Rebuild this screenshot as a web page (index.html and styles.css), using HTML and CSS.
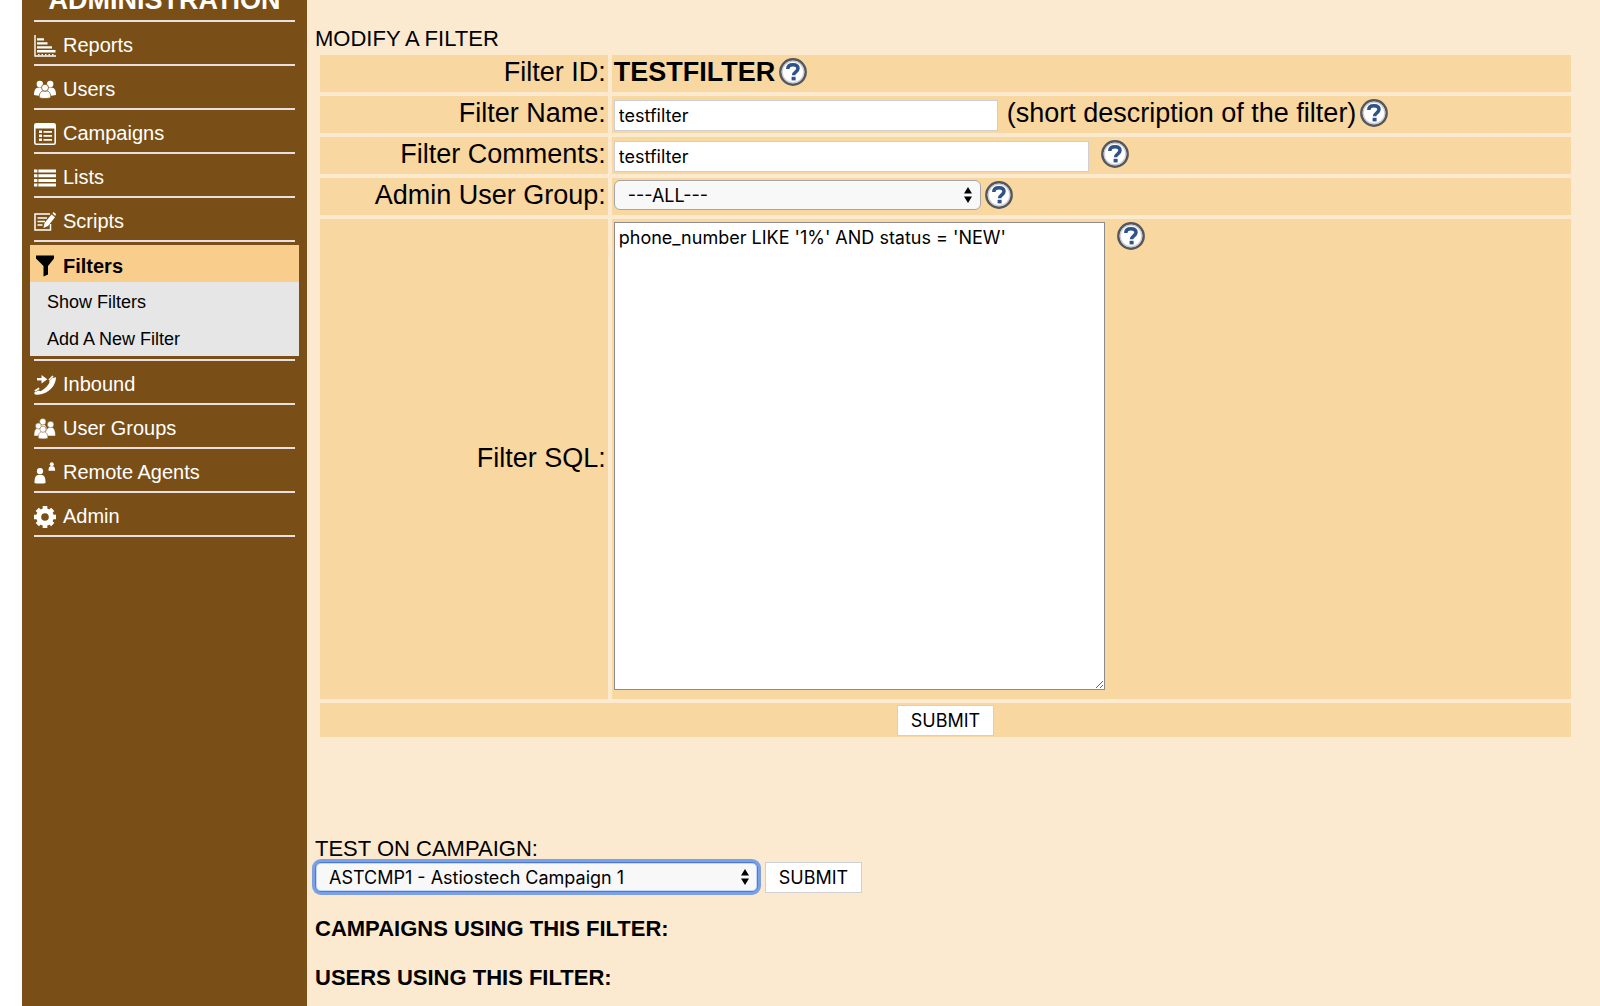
FILE: index.html
```html
<!DOCTYPE html>
<html lang="en">
<head>
<meta charset="utf-8">
<meta name="viewport" content="width=device-width, initial-scale=1">
<title>Administration: Modify Filter</title>
<link rel="stylesheet" href="styles.css">
</head>
<body>
<svg class="sprite" aria-hidden="true">
  <symbol id="help" viewBox="0 0 28 28">
    <circle cx="14" cy="14" r="12.6" fill="#fff" stroke="#55575a" stroke-width="2.6"/>
    <circle cx="14" cy="14" r="10.8" fill="none" stroke="#c9ccd6" stroke-width="1.2"/>
    <path d="M8.800 11C8.800 7.800 11 6.800 14 6.800c3.200 0 5 1.400 5 3.800 0 3.200-4.400 3.200-4.400 6.600" fill="none" stroke="#2f5288" stroke-width="3.500"/>
    <rect x="12.600" y="18.800" width="4" height="3.600" fill="#2f5288"/>
  </symbol>
</svg>
<div class="page">
  <nav class="sidebar" aria-label="Administration">
    <h1 class="brand">ADMINISTRATION</h1>
    <ul class="menu">
      <li><a class="item" href="#reports">
        <svg class="icon" viewBox="0 0 22 22"><path d="M1 0v21h21" fill="none" stroke="#fff" stroke-width="1.4"/><path d="M3 3.200h7v2.200H3zM3 7.200h10.500v2.200H3zM3 11.200h15v2.200H3zM3 15h18.500v2.400H3z" fill="#fff"/><path d="M4 19.600h17" stroke="#fff" stroke-width="1.200" stroke-dasharray="1.500 2"/></svg>Reports</a></li>
      <li><a class="item" href="#users">
        <svg class="icon" viewBox="0 0 22 22" fill="#fff"><circle cx="5.800" cy="5" r="3.200"/><circle cx="16.200" cy="5" r="3.200"/><path d="M0 16c0-4.800 1.500-7.500 5-7.500h12c3.500 0 5 2.700 5 7.500l-4.500.8H4.500z"/><g stroke="#7a4f17" stroke-width=".8"><path d="M5.200 18.500c0-4.500 1.800-6.500 4.300-6.500h3c2.500 0 4.300 2 4.300 6.500-1.600 1.300-10 1.300-11.600 0z"/><circle cx="11" cy="8.700" r="3.500"/></g></svg>Users</a></li>
      <li><a class="item" href="#campaigns">
        <svg class="icon" viewBox="0 0 22 22"><rect x=".8" y=".8" width="20.400" height="20.400" rx="1.500" fill="none" stroke="#fff" stroke-width="1.600"/><path d="M1 1h20v4.500H1z" fill="#fff"/><path d="M5 8.800h3M5 12.800h3M5 16.800h3" stroke="#fff" stroke-width="2.600"/><path d="M9.500 8.800H18M9.500 12.800H18M9.500 16.800H18" stroke="#fff" stroke-width="1.700"/></svg>Campaigns</a></li>
      <li><a class="item" href="#lists">
        <svg class="icon" viewBox="0 0 22 22"><path d="M0 4h3.400M4.400 4H22M0 8.700h3.400M4.400 8.700H22M0 13.400h3.400M4.400 13.400H22M0 18.100h3.400M4.400 18.100H22" stroke="#fff" stroke-width="3"/></svg>Lists</a></li>
      <li><a class="item" href="#scripts">
        <svg class="icon" viewBox="0 0 22 22"><path d="M16 3H1v16h15.500v-6" fill="none" stroke="#fff" stroke-width="1.500"/><path d="M3.500 7h9.500M3.500 10.500h7.500M3.500 14h5" stroke="#fff" stroke-width="1.500"/><path d="M9.500 17l1-5 7-8.500 3.500 2.700-7 8.800zM18.500 2.500l1-1.500 2.500 2-.8 2z" fill="#fff"/></svg>Scripts</a></li>
      <li class="open">
        <a class="item current" href="#filters" aria-current="page">
        <svg class="icon" viewBox="0 0 22 22"><path d="M2 .5h18v3l-6 7.500v8.500l-4.500 2V11L2 3.500z" fill="#000"/></svg>Filters</a>
        <ul class="submenu">
          <li><a href="#show-filters">Show Filters</a></li>
          <li><a href="#add-filter">Add A New Filter</a></li>
        </ul>
      </li>
      <li><a class="item" href="#inbound">
        <svg class="icon" viewBox="0 0 22 22"><path d="M0 18.800L4.500 16.500 6.500 17.200C11 15 14.200 11.600 15.500 8.600L15.200 7 18.500 4 22 3.200C22 11 15.500 19.500 4 20.800L1 20.500z" fill="#fff"/><path d="M.8 17l4.400-2.800M15 6l4-4" stroke="#fff" stroke-width="1.700"/><path d="M3 5.200h7" stroke="#fff" stroke-width="2.400"/><path d="M7.500 1l5.800 4.200-5.800 4.300z" fill="#fff"/></svg>Inbound</a></li>
      <li><a class="item" href="#user-groups">
        <svg class="icon" viewBox="0 0 22 22" fill="#fff" stroke="#7a4f17" stroke-width=".5"><path d="M4.800 14c0-5 1.600-8 4-8s4.500 3 4.500 8z"/><circle cx="8.800" cy="3.700" r="3.200"/><path d="M0 18c0-5 1.200-8 4-8s5 3 5 8zM11 18c0-5 2.500-9 5.800-9s4.700 3.500 4.700 9z"/><circle cx="4.400" cy="8" r="3"/><circle cx="16.600" cy="6.500" r="3.200"/><path d="M4.200 20c0-4.500 1.800-6.500 4.700-6.500s5 2 5 6.500c-1.500 1.200-8.200 1.200-9.700 0z"/><circle cx="9" cy="11.200" r="3.100"/></svg>User Groups</a></li>
      <li><a class="item" href="#remote-agents">
        <svg class="icon" viewBox="0 0 22 22" fill="#fff"><circle cx="6" cy="9.200" r="3.100"/><path d="M.5 21c0-5.500 1-7.500 3.500-8h4c2.500.5 3.500 2.500 3.500 8-1.500.8-9.500.8-11 0z"/><circle cx="17.800" cy="2.200" r="2"/><path d="M14.500 8.800c0-3 .8-4.200 2-4.500h2.600c1.200.3 2 1.500 2 4.500z"/></svg>Remote Agents</a></li>
      <li><a class="item" href="#admin">
        <svg class="icon" viewBox="0 0 22 22"><circle cx="11" cy="11" r="6.300" fill="none" stroke="#fff" stroke-width="5"/><path d="M11 0v4M11 18v4M0 11h4M18 11h4M3.300 3.300l3 3M15.700 15.700l3 3M18.700 3.300l-3 3M6.300 15.700l-3 3" stroke="#fff" stroke-width="4.600"/></svg>Admin</a></li>
    </ul>
  </nav>

  <main class="content">
    <h2 class="title">MODIFY A FILTER</h2>
    <form class="filter-form">
      <div class="row">
        <div class="name">Filter ID:</div>
        <div class="value"><b>TESTFILTER</b><svg class="help" role="img" aria-label="Help"><use href="#help"/></svg></div>
      </div>
      <div class="row">
        <label class="name" for="filter-name">Filter Name:</label>
        <div class="value"><input class="field field-name" id="filter-name" type="text" value="testfilter"><span class="hint">(short description of the filter)</span><svg class="help" role="img" aria-label="Help"><use href="#help"/></svg></div>
      </div>
      <div class="row">
        <label class="name" for="filter-comments">Filter Comments:</label>
        <div class="value"><input class="field field-comments" id="filter-comments" type="text" value="testfilter"><svg class="help apart" role="img" aria-label="Help"><use href="#help"/></svg></div>
      </div>
      <div class="row">
        <label class="name" for="user-group">Admin User Group:</label>
        <div class="value"><select class="select select-group" id="user-group"><option>---ALL---</option></select><svg class="help" role="img" aria-label="Help"><use href="#help"/></svg></div>
      </div>
      <div class="row">
        <label class="name" for="filter-sql">Filter SQL:</label>
        <div class="value"><textarea class="sql" id="filter-sql" spellcheck="false">phone_number LIKE '1%' AND status = 'NEW'</textarea><svg class="help apart" role="img" aria-label="Help"><use href="#help"/></svg></div>
      </div>
      <div class="actions"><button class="button" type="submit">SUBMIT</button></div>
    </form>

    <form class="test-form">
      <label class="title" for="campaign">TEST ON CAMPAIGN:</label>
      <div class="test-controls">
        <select class="select select-campaign" id="campaign"><option>ASTCMP1 - Astiostech Campaign 1</option></select>
        <button class="button" type="submit">SUBMIT</button>
      </div>
    </form>
    <h2 class="usage">CAMPAIGNS USING THIS FILTER:</h2>
    <h2 class="usage">USERS USING THIS FILTER:</h2>
  </main>
</div>
</body>
</html>
```
FILE: styles.css
```css
* {
  box-sizing: border-box;
}

body {
  margin: 0;
  background: #fff;
  color: #000;
  font-family: "Liberation Sans", Arial, Helvetica, sans-serif;
}

.sprite {
  display: none;
}

.page {
  display: flex;
  min-height: 100vh;
  padding-left: 22px;
}

/* Sidebar */

.sidebar {
  flex: none;
  width: 285px;
  padding: 0 8px;
  background: #7a4f17;
}

.brand {
  margin: -14px 4px 0;
  border-bottom: 2px solid #e9dfe0;
  font-size: 27px;
  line-height: 28px;
  padding-bottom: 6px;
  text-align: center;
  white-space: nowrap;
  color: #fff;
}

.menu,
.submenu {
  margin: 0;
  padding: 0;
  list-style: none;
}

.menu > li {
  margin: 0 4px;
  border-bottom: 2px solid #e9dfe0;
}

.menu a {
  color: #fff;
  text-decoration: none;
}

.item {
  display: flex;
  align-items: center;
  gap: 7px;
  height: 42px;
  padding-top: 5px;
  font-size: 20px;
}

.icon {
  flex: none;
  width: 22px;
  height: 22px;
}

.menu > .open {
  padding: 3px 0;
}

.menu .current {
  height: 37px;
  margin: 0 -4px;
  padding: 5px 4px 0;
  background: #f9cd8b;
  color: #000;
  font-weight: bold;
}

.submenu {
  margin: 0 -4px;
  background: #e6e6e6;
}

.submenu a {
  display: block;
  padding: 4px 17px 0;
  font-size: 18px;
  line-height: 33px;
  color: #000;
}

/* Main column */

.content {
  flex: 1;
  min-width: 0;
  padding: 25px 29px 0 8px;
  background: #fcead0;
}

.title {
  display: block;
  margin: 0;
  font-size: 22px;
  font-weight: normal;
  line-height: 27px;
}

.filter-form {
  display: flex;
  flex-direction: column;
  gap: 4px;
  margin: 3px 0 0 5px;
}

.row {
  display: grid;
  grid-template-columns: 23% 1fr;
  gap: 4px;
}

.name,
.value {
  min-height: 37px;
  background: #f8d7a0;
  font-size: 27px;
  line-height: 35px;
}

.name {
  display: flex;
  align-items: center;
  justify-content: flex-end;
  padding: 0 2px 2px;
}

.value {
  display: flex;
  align-items: flex-start;
  padding: 0 2px;
}

.help {
  flex: none;
  width: 28px;
  height: 28px;
  margin: 3px 0 0 4px;
}

.help.apart {
  margin-left: 12px;
}

.hint {
  margin-left: 9px;
}

.field,
.select,
.sql,
.button {
  margin: 0;
  border-radius: 0;
  background-color: #fff;
  color: #000;
  font-family: Inter, "Noto Sans", sans-serif;
  font-size: 18px;
}

.field {
  height: 31px;
  margin-top: 4px;
  padding: 0 4px;
  border: 1px solid #cfcfd2;
}

.field-name {
  width: 384px;
}

.field-comments {
  width: 475px;
}

.select {
  height: 30px;
  padding: 0 28px 0 13px;
  border: 1px solid #a6a6a6;
  border-radius: 6px;
  appearance: none;
  background: #f8f8f8 url("data:image/svg+xml,%3Csvg xmlns='http://www.w3.org/2000/svg' width='8' height='16'%3E%3Cpath d='M0 6.500 4 0l4 6.500zM0 9.500 4 16l4-6.500z'/%3E%3C/svg%3E") no-repeat right 8px center;
}

.select-group {
  width: 367px;
  margin-top: 2px;
}

.sql {
  width: 491px;
  height: 468px;
  margin: 3px 0 9px;
  padding: 4px;
  border: 1px solid #8c8c8c;
  line-height: 22px;
}

.button {
  height: 31px;
  width: 97px;
  padding: 0;
  border: 1px solid #cfd0d4;
}

.actions {
  padding: 2px 0 1px;
  background: #f8d7a0;
  text-align: center;
  line-height: 0;
}

.test-form {
  margin-top: 98px;
}

.test-controls {
  display: flex;
  align-items: flex-start;
  gap: 7px;
}

.select-campaign {
  width: 443px;
  border-color: #4a7bd6;
  box-shadow: 0 0 0 3px #7ba1e4, inset 0 0 0 1px #c5d6f6;
}

.usage {
  margin: 23px 0 0;
  font-size: 22px;
  line-height: 26px;
}
```
